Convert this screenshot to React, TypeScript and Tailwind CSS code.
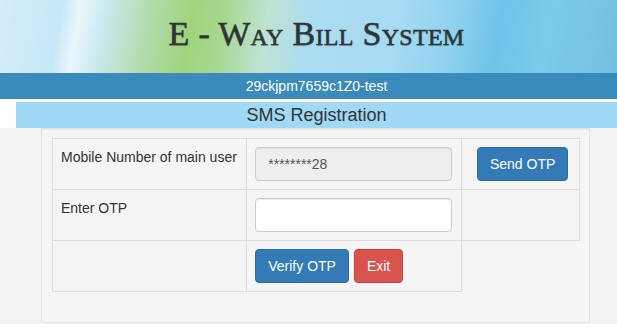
import React from 'react';

const App: React.FC = () => {
  return (
    <div className="min-h-screen bg-white font-['Liberation_Sans',Arial,sans-serif] text-[14px] leading-[20px] text-[#333]">
      {/* banner */}
      <div className="h-[73px] bg-[linear-gradient(100deg,#d4edf8_0%,#c6e7f5_10%,#eaf7fc_13%,#cbe9f0_17%,#b3dcae_24%,#9fd47c_31%,#a6d78f_36%,#bfe3d2_43%,#abdcf2_50%,#a6dbf3_64%,#92d2ef_72%,#6fc4e8_80%,#7ccbea_88%,#74bfe1_100%)] flex items-center justify-center pl-[16px]">
        <h1 className="font-['Liberation_Serif','Times_New_Roman',serif] [font-variant:small-caps] text-[34px] leading-none text-[#2f3535] tracking-[0.3px] [-webkit-text-stroke:0.5px_#2f3535] [text-shadow:0_1px_1px_rgba(0,0,0,0.25)] -mt-[6px]">
          E - Way Bill System
        </h1>
      </div>

      <div className="h-[26px] bg-[#3a8bbb] text-white text-center leading-[26px] pl-[16px]">
        29ckjpm7659c1Z0-test
      </div>

      <div className="h-[3px]" />

      <div className="ml-[16px] h-[26px] bg-[#a0d9f5] text-center text-[18px] leading-[26px] text-[#333]">
        SMS Registration
      </div>

      <div className="bg-[#f2f2f2] pb-px">
        <div className="ml-[41px] mr-[27px] border border-[#e3e3e3] bg-[#f5f5f5] px-[10px] pt-[9px] pb-[30px] shadow-[inset_0_1px_1px_rgba(0,0,0,0.05)]">
          <table className="border-collapse w-[528px]">
            <tbody>
              <tr>
                <td className="w-[195px] border border-[#ddd] p-[8px] align-top">Mobile Number of main user</td>
                <td className="w-[215px] border border-[#ddd] p-[8px] align-top">
                  <div className="h-[34px] w-[197px] rounded-[4px] border border-[#ccc] bg-[#eee] px-[12px] py-[6px] text-[#555] shadow-[inset_0_1px_1px_rgba(0,0,0,0.075)]">
                    ********28
                  </div>
                </td>
                <td className="w-[118px] border border-[#ddd] py-[8px] pl-[12px] pr-[8px] align-top text-center">
                  <button className="rounded-[4px] border border-[#2e6da4] bg-[#337ab7] px-[12px] py-[6px] text-white">
                    Send OTP
                  </button>
                </td>
              </tr>
              <tr>
                <td className="border border-[#ddd] p-[8px] align-top">Enter OTP</td>
                <td className="border border-[#ddd] p-[8px] align-top">
                  <input
                    type="text"
                    className="block h-[34px] w-[197px] rounded-[4px] border border-[#ccc] bg-white px-[12px] py-[6px] text-[#555] shadow-[inset_0_1px_1px_rgba(0,0,0,0.075)] outline-none"
                  />
                </td>
                <td className="border border-[#ddd] p-[8px]" />
              </tr>
              <tr>
                <td className="border border-[#ddd] p-[8px]" />
                <td className="border border-[#ddd] p-[8px] align-top">
                  <div className="flex gap-[5px]">
                    <button className="rounded-[4px] border border-[#2e6da4] bg-[#337ab7] px-[12px] py-[6px] text-white">
                      Verify OTP
                    </button>
                    <button className="rounded-[4px] border border-[#d43f3a] bg-[#d9534f] px-[12px] py-[6px] text-white">
                      Exit
                    </button>
                  </div>
                </td>
              </tr>
            </tbody>
          </table>
        </div>
      </div>
    </div>
  );
};

export default App;
